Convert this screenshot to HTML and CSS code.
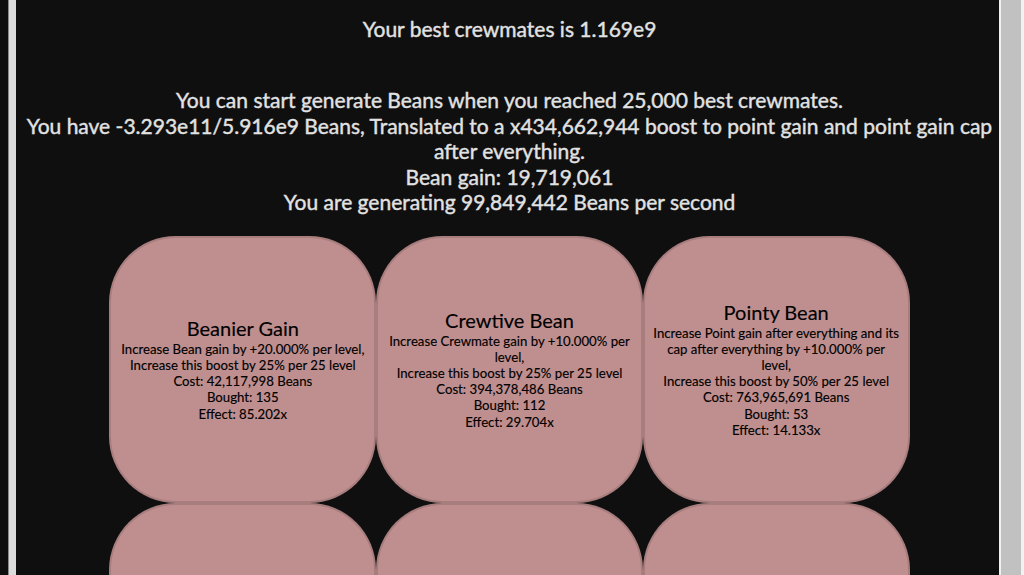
FILE: index.html
```html
<!DOCTYPE html>
<html>
<head>
    <meta charset="utf-8">
    <title>Beans</title>
    <link rel="stylesheet" href="styles.css">
</head>
<body>
    <div class="left-bar"></div>

    <div class="main">
        <div class="best">Your best crewmates is 1.169e9</div>

        <div class="info">
            You can start generate Beans when you reached 25,000 best crewmates.<br>
            You have -3.293e11/5.916e9 Beans, Translated to a x434,662,944 boost to point gain and point gain cap after everything.<br>
            Bean gain: 19,719,061<br>
            You are generating 99,849,442 Beans per second
        </div>

        <div class="buyables">
            <button class="buyable">
                <span class="buyable-title">Beanier Gain</span>
                Increase Bean gain by +20.000% per level,<br>
                Increase this boost by 25% per 25 level<br>
                Cost: 42,117,998 Beans<br>
                Bought: 135<br>
                Effect: 85.202x
            </button>
            <button class="buyable">
                <span class="buyable-title">Crewtive Bean</span>
                Increase Crewmate gain by +10.000% per level,<br>
                Increase this boost by 25% per 25 level<br>
                Cost: 394,378,486 Beans<br>
                Bought: 112<br>
                Effect: 29.704x
            </button>
            <button class="buyable">
                <span class="buyable-title">Pointy Bean</span>
                Increase Point gain after everything and its cap after everything by +10.000% per level,<br>
                Increase this boost by 50% per 25 level<br>
                Cost: 763,965,691 Beans<br>
                Bought: 53<br>
                Effect: 14.133x
            </button>
            <button class="buyable"></button>
            <button class="buyable"></button>
            <button class="buyable"></button>
        </div>
    </div>

    <div class="scroll-bar"></div>
</body>
</html>
```

FILE: styles.css
```css
html, body {
    height: 100%;
    overflow: hidden;
}
body {
    margin: 0;
    display: flex;
    background: #0f0f0f;
    color: #e2e2e2;
    font-family: 'Lato', 'Noto Sans', sans-serif;
}
.left-bar {
    flex: none;
    width: 7px;
    margin-left: 8px;
    background: #dcdcdc;
    border-left: 1px solid #8a8a8a;
}
.main {
    flex: 1;
    min-width: 0;
    padding: 16px 0 0 4px;
    text-align: center;
    font-size: 21px;
    line-height: 25.4px;
    -webkit-text-stroke: 0.4px currentColor;
}
.info {
    margin-top: 46px;
}
.buyables {
    display: flex;
    flex-wrap: wrap;
    justify-content: center;
    width: 801px;
    margin: 22px auto 0;
    -webkit-text-stroke: 0;
}
.buyable {
    width: 266.7px;
    height: 266.7px;
    box-sizing: border-box;
    padding: 0 6.5px 2px;
    border: 2.67px solid rgba(0, 0, 0, 0.125);
    border-radius: 25%;
    background: #bf8f8f;
    color: #000;
    font-family: 'Lato', 'Noto Sans', sans-serif;
    font-size: 13.2px;
    line-height: 16.2px;
    text-align: center;
    -webkit-text-stroke: 0.15px currentColor;
}
.buyable-title {
    display: block;
    font-size: 20px;
    line-height: 24px;
    margin-bottom: 1px;
}
.scroll-bar {
    flex: none;
    width: 20px;
    border-left: 2px solid #f0f0f0;
    border-right: 3px solid #f1f1f1;
    background: #c1c1c1;
}
```
